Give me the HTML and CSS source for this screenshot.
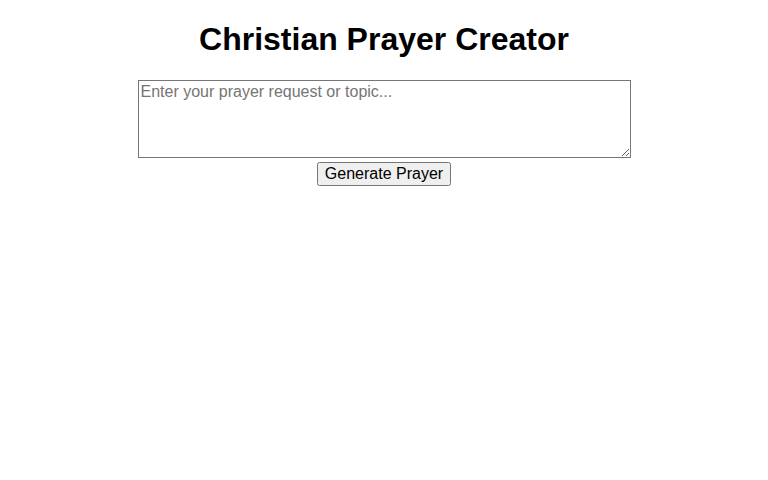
FILE: index.html
```html
<!DOCTYPE html>
<html lang="en">
<head>
    <meta charset="UTF-8">
    <meta name="viewport" content="width=device-width, initial-scale=1.0">
    <title>Christian Prayer Creator</title>
    <link rel="stylesheet" href="styles.css">
</head>
<body>
    <h1>Christian Prayer Creator</h1>
    <div class="prayer-form">
        <textarea id="request" placeholder="Enter your prayer request or topic..."></textarea>
        <button id="generate">Generate Prayer</button>
    </div>
    <div id="prayer"></div>
</body>
</html>
```

FILE: styles.css
```css
body {
    font-family: "Liberation Sans", Arial, sans-serif;
    margin: 0;
    text-align: center;
    background-color: #fff;
    color: #000;
}
h1 {
    font-size: 32px;
    margin: 21.44px 0;
}
.prayer-form {
    display: flex;
    flex-direction: column;
    align-items: center;
    gap: 4px;
}
.prayer-form textarea {
    box-sizing: border-box;
    width: 493px;
    height: 78px;
    padding: 2px;
    font-family: "Liberation Sans", Arial, sans-serif;
    font-size: 16px;
    border: 1px solid #767676;
}
.prayer-form textarea::placeholder {
    color: #757575;
}
.prayer-form button {
    font-family: "Liberation Sans", Arial, sans-serif;
    font-size: 16px;
    padding: 1px 6px;
}
```
